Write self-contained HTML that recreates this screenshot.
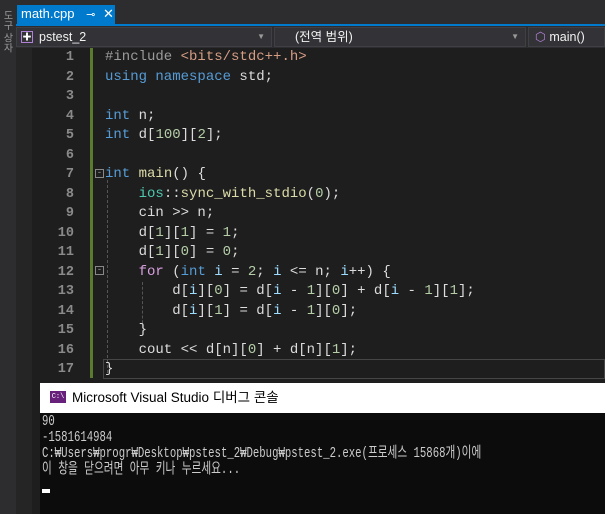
<!DOCTYPE html>
<html><head><meta charset="utf-8"><style>
*{margin:0;padding:0;box-sizing:border-box}
body{width:605px;height:514px;overflow:hidden;background:#2d2d30;position:relative;font-family:"Liberation Sans","Noto Sans CJK KR",sans-serif}
.abs{position:absolute}
#side{left:0;top:0;width:16px;height:514px;background:#2d2d30}
#tabbar{left:16px;top:0;width:589px;height:24px;background:#2d2d30}
#tab{left:17px;top:5px;width:98px;height:20px;background:#007acc;color:#fff;font-size:13px;line-height:18px;padding:0 0 0 4px}
#blue{left:16px;top:24px;width:589px;height:2px;background:#007acc}
#drow{left:16px;top:26px;width:589px;height:22px;background:#2d2d30}
.dd{top:27px;height:20px;background:#333337;border:1px solid #3f3f46;color:#f1f1f1;font-size:12.5px;line-height:18px;padding:0 0 0 4px;overflow:hidden}
#editor{left:16px;top:48px;width:589px;height:466px;background:#1e1e1e}
#lm{left:16px;top:48px;width:16px;height:466px;background:#252526}
#green{left:90px;top:48px;width:3px;height:330px;background:#5a7a2e}
.code{font-family:"Liberation Mono",monospace;font-size:14px;line-height:19.5px;white-space:pre;color:#dcdcdc}
#nums{left:32px;top:48px;width:42px;text-align:right;color:#8a8a8a;font-weight:bold;font-size:13.5px}
#src{left:105px;top:48px}
.k{color:#569cd6}.p{color:#9b9b9b}.s{color:#d69d85}.f{color:#dcdcaa}.t{color:#4ec9b0}.n{color:#b5cea8}.v{color:#9cdcfe}.c{color:#d8a0df}
#cur{left:103px;top:359px;width:502px;height:20px;border:1px solid #464646}
#ctitle{left:40px;top:383px;width:565px;height:30px;background:#fff;color:#000;font-size:13.5px;line-height:18px;padding:6px 0 0 32px}
#cicon{left:50px;top:391px;width:16px;height:12px;background:#68217a;color:#fff;font-size:7px;line-height:12px;text-align:center;font-family:"Liberation Mono",monospace}
#cbody{left:40px;top:413px;width:565px;height:101px;background:#0c0c0c}
#ctext{left:42px;top:414px;color:#cccccc;font-family:"Liberation Mono","Noto Sans CJK KR",monospace;font-size:15px;line-height:16px;white-space:pre;transform:scaleX(0.71);transform-origin:0 0}
.fold{width:9px;height:9px;border:1px solid #888;color:#999;font-size:9px;line-height:6px;text-align:center;font-family:"Liberation Mono"}
</style></head><body>
<div class="abs" id="side"></div>
<div class="abs" style="left:0;top:10px;width:14px;color:#999;font-size:10px;writing-mode:vertical-rl">도구 상자</div>
<div class="abs" id="tabbar"></div>
<div class="abs" id="tab">math.cpp <span style="font-size:11px;margin-left:8px">⊸</span> <span style="margin-left:4px">✕</span></div>
<div class="abs" id="blue"></div>
<div class="abs" id="drow"></div>
<div class="abs dd" style="left:16px;width:256px;padding-left:22px">pstest_2<span style="position:absolute;right:6px;top:0;color:#999;font-size:8px;line-height:18px">▼</span></div>
<div class="abs" style="left:21px;top:31px;width:12px;height:12px;border:1px solid #b180d7;color:#fff;font-size:9px;line-height:10px;text-align:center">✚</div>
<div class="abs dd" style="left:274px;width:252px;padding-left:20px">(전역 범위)<span style="position:absolute;right:6px;top:0;color:#999;font-size:8px;line-height:18px">▼</span></div>
<div class="abs dd" style="left:528px;width:77px;padding-left:6px"><span style="color:#b180d7">⬡</span> main()</div>
<div class="abs" id="editor"></div>
<div class="abs" id="lm"></div>
<div class="abs" id="green"></div>
<div class="abs code" id="nums">1
2
3
4
5
6
7
8
9
10
11
12
13
14
15
16
17</div>
<div class="abs" style="left:107px;top:180px;height:193px;border-left:1px dashed #555"></div>
<div class="abs" style="left:142px;top:282px;height:46px;border-left:1px dashed #555"></div>
<div class="abs fold" style="left:95px;top:169px">-</div>
<div class="abs fold" style="left:95px;top:266px">-</div>
<div class="abs" id="cur"></div>
<div class="abs code" id="src"><span class="p">#include </span><span class="s">&lt;bits/stdc++.h&gt;</span>
<span class="k">using namespace</span> std;

<span class="k">int</span> n;
<span class="k">int</span> d[<span class="n">100</span>][<span class="n">2</span>];

<span class="k">int</span> <span class="f">main</span>() {
    <span class="t">ios</span>::<span class="f">sync_with_stdio</span>(<span class="n">0</span>);
    cin &gt;&gt; n;
    d[<span class="n">1</span>][<span class="n">1</span>] = <span class="n">1</span>;
    d[<span class="n">1</span>][<span class="n">0</span>] = <span class="n">0</span>;
    <span class="c">for</span> (<span class="k">int</span> <span class="v">i</span> = <span class="n">2</span>; <span class="v">i</span> &lt;= n; <span class="v">i</span>++) {
        d[<span class="v">i</span>][<span class="n">0</span>] = d[<span class="v">i</span> - <span class="n">1</span>][<span class="n">0</span>] + d[<span class="v">i</span> - <span class="n">1</span>][<span class="n">1</span>];
        d[<span class="v">i</span>][<span class="n">1</span>] = d[<span class="v">i</span> - <span class="n">1</span>][<span class="n">0</span>];
    }
    cout &lt;&lt; d[n][<span class="n">0</span>] + d[n][<span class="n">1</span>];
}</div>
<div class="abs" id="ctitle">Microsoft Visual Studio 디버그 콘솔</div>
<div class="abs" id="cicon">C:\</div>
<div class="abs" id="cbody"></div>
<div class="abs" id="ctext">90
-1581614984
C:₩Users₩progr₩Desktop₩pstest_2₩Debug₩pstest_2.exe(프로세스 15868개)이에
이 창을 닫으려면 아무 키나 누르세요...</div>
<div class="abs" style="left:42px;top:489px;width:8px;height:4px;background:#fff"></div>
</body></html>
